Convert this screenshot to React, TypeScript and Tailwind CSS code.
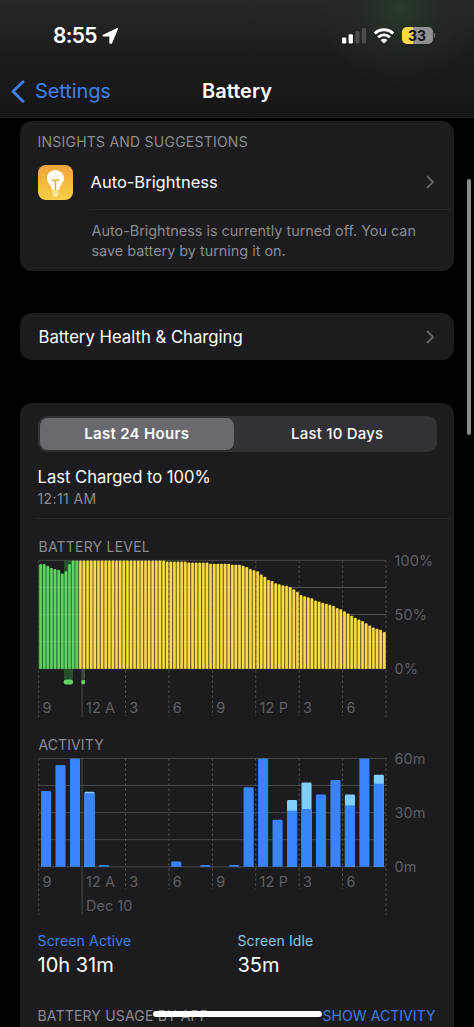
import React from 'react'

const PLOT_LEFT = 18.7
const PLOT_WIDTH = 347.3
const PLOT_TOP = 5.4
const PLOT_HEIGHT = 108.4
const PLOT_BOTTOM = PLOT_TOP + PLOT_HEIGHT
const PLOT_RIGHT = PLOT_LEFT + PLOT_WIDTH

const HOUR = PLOT_WIDTH / 24
const QUARTER = PLOT_WIDTH / 96

const HOUR_LABELS = ['9', '12 A', '3', '6', '9', '12 P', '3', '6']

// One reading every 15 minutes
const BATTERY_LEVELS = [
  96.6, 96.6, 95, 93, 92, 91.3, 88, 90, 96.6, 100, 100,
  ...Array<number>(24).fill(100),
  ...Array<number>(6).fill(99),
  ...Array<number>(6).fill(98),
  ...Array<number>(6).fill(97),
  96, 96, 96, 95, 94, 92, 91, 90, 87, 85, 82, 81, 79, 78, 77, 76.5, 75.5, 73.5, 71, 68, 67, 66, 65, 63,
  62, 61, 60, 59, 58, 56, 55, 53, 51, 49, 47, 45.5, 44, 42, 40, 38, 37, 36, 34,
]
const GREEN_COUNT = 11

// Minutes per hour, [active, idle]
const ACTIVITY: [number, number][] = [
  [42, 0], [56.3, 0], [60, 0], [40.7, 0.8], [1, 0], [0, 0], [0, 0], [0, 0],
  [0, 0], [3, 0], [0, 0], [1, 0], [0, 0], [1, 0], [44, 0], [60, 0],
  [26, 0], [31, 6], [32, 14.7], [40, 0], [48, 0], [34, 6], [60, 0], [46, 5],
]

function ChevronRight({ className = '' }: { className?: string }) {
  return (
    <svg className={`shrink-0 ${className}`} width="9" height="14" viewBox="0 0 9 14" fill="none">
      <path d="M1.5 1.5L7 7L1.5 12.5" stroke="#636366" strokeWidth="1.9" strokeLinecap="round" strokeLinejoin="round" />
    </svg>
  )
}

function StatusBar() {
  return (
    <div className="flex h-[71px] items-center pr-[39px] pl-[53px] text-white">
      <span className="w-[49px] text-[21px] leading-5 font-semibold tracking-[-0.7px]">8:55</span>
      <svg width="17" height="18" viewBox="0 0 17 18">
        <path
          d="M15 2L1.5 8.6H8.3V15.8H9.2Z"
          fill="white"
          stroke="white"
          strokeWidth="1.9"
          strokeLinejoin="round"
        />
      </svg>
      <div className="ml-auto flex items-center">
        <svg width="25" height="17" viewBox="0 0 25 17">
          <rect x="0" y="10.5" width="4.3" height="6" rx="1.1" fill="white" />
          <rect x="6.6" y="7.3" width="4.3" height="9.2" rx="1.1" fill="white" />
          <rect x="13.2" y="4.2" width="4.3" height="12.3" rx="1.1" fill="#4a4c4b" />
          <rect x="19.8" y="1" width="4.3" height="15.5" rx="1.1" fill="#4a4c4b" />
        </svg>
        <svg className="ml-[6px]" width="22" height="16" viewBox="0 0 22 16" fill="none">
          <path d="M1.7 5.5A13.4 13.4 0 0 1 20.3 5.5" stroke="white" strokeWidth="2.9" />
          <path d="M5.1 9.2A8.5 8.5 0 0 1 16.9 9.2" stroke="white" strokeWidth="2.8" />
          <path d="M7.6 12.1A4.9 4.9 0 0 1 14.4 12.1L11 15.6Z" fill="white" />
        </svg>
        <div className="ml-[7px] flex items-center">
          <div className="flex h-[17px] w-[31px] items-center justify-center rounded-[5px] bg-linear-to-r from-[#f9d949] from-35% to-[#8f908f] to-35%">
            <span className="text-[14px] leading-none font-bold text-[#161616]">33</span>
          </div>
          <div className="ml-px h-[5px] w-[1.5px] rounded-r bg-[#7c7d7c]" />
        </div>
      </div>
    </div>
  )
}

function Header() {
  return (
    <header className="h-[118px] border-b border-[#1f1f20] bg-[radial-gradient(ellipse_80px_75px_at_400px_8px,#293b2b_0%,#242c2599_50%,transparent_100%),linear-gradient(to_bottom,#272728,#1c1c1c_50%,#151515)]">
      <StatusBar />
      <div className="grid h-10 grid-cols-3 items-center">
        <a className="flex items-center pl-[11px] text-[#4080ed]">
          <svg width="14" height="23" viewBox="0 0 14 23" fill="none">
            <path d="M12 1.7L2 11.5L12 21.3" stroke="currentColor" strokeWidth="2.8" strokeLinecap="round" strokeLinejoin="round" />
          </svg>
          <span className="ml-2.5 text-xl leading-6 tracking-[-0.1px]">Settings</span>
        </a>
        <h1 className="text-center text-xl leading-6 font-semibold tracking-[0.05px] text-white">Battery</h1>
      </div>
    </header>
  )
}

function BulbIcon() {
  return (
    <div className="flex size-[35px] shrink-0 items-center justify-center rounded-lg bg-linear-to-b from-[#f0a23a] to-[#f6cf48]">
      <svg width="19" height="28" viewBox="0 0 19 28" fill="none">
        <path
          d="M9.5 1C4.7 1 1 4.6 1 9.1C1 14 5 15.8 5.9 20.4C6 21 6.3 21.3 6.9 21.3H12.1C12.7 21.3 13 21 13.1 20.4C14 15.8 18 14 18 9.1C18 4.6 14.3 1 9.5 1Z"
          fill="#fffdf4"
        />
        <path d="M9.5 21V11.2M6 11.2H13" stroke="#e3ab3c" strokeWidth="1.4" />
        <path d="M6.6 23H12.4M7 25H12" stroke="#fffdf4" strokeWidth="1.2" strokeLinecap="round" />
        <path d="M8 26.8H11" stroke="#fffdf4" strokeWidth="1" strokeLinecap="round" />
      </svg>
    </div>
  )
}

function InsightsCard() {
  return (
    <section className="h-[150px] rounded-xl bg-[#1c1c1e] pt-[11px] pl-[17.5px]">
      <h2 className="text-[14px] leading-5 tracking-[0.23px] text-[#8b8b90]">INSIGHTS AND SUGGESTIONS</h2>
      <div className="flex">
        <div className="pt-[13px]">
          <BulbIcon />
        </div>
        <div className="ml-4 flex-1">
          <div className="flex h-[58px] items-center justify-between border-b border-[#28282a] pt-[3px] pr-[19px] pl-0.5">
            <span className="text-[16.5px] leading-6 text-white">Auto-Brightness</span>
            <ChevronRight />
          </div>
          <p className="pt-[11px] pl-[3px] text-[14.4px] leading-5 text-[#8b8b90]">
            Auto-Brightness is currently turned off. You can
            <br />
            save battery by turning it on.
          </p>
        </div>
      </div>
    </section>
  )
}

function Gridlines() {
  return (
    <>
      {[0, 0.25, 0.5, 0.75, 1].map((f) => (
        <line
          key={f}
          x1={PLOT_LEFT}
          x2={PLOT_RIGHT}
          y1={PLOT_TOP + f * PLOT_HEIGHT}
          y2={PLOT_TOP + f * PLOT_HEIGHT}
          stroke="#464648"
        />
      ))}
    </>
  )
}

function HourLines({ bottom, edgeBottom, labelY }: { bottom: number; edgeBottom: number; labelY: number }) {
  return (
    <>
      {Array.from({ length: 9 }, (_, i) => {
        const x = PLOT_LEFT + i * HOUR * 3
        const midnight = i === 1
        const edge = i === 0 || i === 8
        return (
          <g key={i}>
            <line
              x1={x}
              x2={x}
              y1={PLOT_TOP}
              y2={edge || midnight ? edgeBottom : bottom}
              stroke={midnight ? '#48484a' : '#505052'}
              strokeDasharray={midnight ? undefined : '2.5 2.5'}
            />
            {HOUR_LABELS[i] && (
              <text x={x + 3.8} y={labelY} fill="#5f5f62" className="text-[14.4px] tracking-[0.15px]">
                {HOUR_LABELS[i]}
              </text>
            )}
          </g>
        )
      })}
    </>
  )
}

function ScaleLabels({ labels }: { labels: string[] }) {
  return (
    <>
      {labels.map((label, i) => (
        <text key={label} x={374.5} y={PLOT_TOP + 5.5 + (i * PLOT_HEIGHT) / 2} fill="#5f5f62" className="text-[14.4px] tracking-[0.15px]">
          {label}
        </text>
      ))}
    </>
  )
}

function BatteryLevelChart() {
  return (
    <svg className="block overflow-visible" width="434" height="172" viewBox="0 0 434 172">
      <Gridlines />
      <HourLines bottom={161} edgeBottom={162} labelY={158} />
      {/* charging window */}
      <rect x="44" y={PLOT_TOP} width="9" height="119" fill="#285f31" fillOpacity="0.75" />
      <rect x="61.5" y={PLOT_BOTTOM} width="3.5" height="10" fill="#3c4b3e" />
      {BATTERY_LEVELS.map((level, i) => {
        const h = (level / 100) * PLOT_HEIGHT
        const x = PLOT_LEFT + i * QUARTER
        const y = PLOT_BOTTOM - h
        const green = i < GREEN_COUNT
        return (
          <g key={i}>
            <rect x={x} y={y + 0.8} width={QUARTER} height={h - 0.8} fill={green ? '#2f8a3b' : '#8c7623'} />
            <rect x={x + 0.7} y={y} width="2.35" height={h} rx="0.6" fill={green ? '#64d267' : '#fbdd4e'} />
          </g>
        )
      })}
      {/* grid stays faintly visible over the bars */}
      {[0.25, 0.5, 0.75].map((f) => (
        <line
          key={f}
          x1={PLOT_LEFT}
          x2={PLOT_RIGHT}
          y1={PLOT_TOP + f * PLOT_HEIGHT}
          y2={PLOT_TOP + f * PLOT_HEIGHT}
          stroke="#ffffff"
          strokeOpacity="0.08"
        />
      ))}
      {[0, 2, 3, 4, 5, 6, 7].map((i) => (
        <line
          key={i}
          x1={PLOT_LEFT + i * HOUR * 3}
          x2={PLOT_LEFT + i * HOUR * 3}
          y1={PLOT_TOP}
          y2={PLOT_BOTTOM}
          stroke="#3a3a2c"
          strokeOpacity="0.45"
          strokeDasharray="2.5 2.5"
        />
      ))}
      <rect x="43.7" y="124.5" width="9.3" height="5" rx="2.2" fill="#64d267" />
      <rect x="61.4" y="124.5" width="3.6" height="5" rx="1.8" fill="#64d267" />
      <ScaleLabels labels={['100%', '50%', '0%']} />
    </svg>
  )
}

function ActivityChart() {
  return (
    <svg className="block overflow-visible" width="434" height="170" viewBox="0 0 434 170">
      <Gridlines />
      <HourLines bottom={136} edgeBottom={161.5} labelY={134} />
      {ACTIVITY.map(([active, idle], i) => {
        const x = PLOT_LEFT + i * HOUR + 2.3
        const total = ((active + idle) / 60) * PLOT_HEIGHT
        const activeH = (active / 60) * PLOT_HEIGHT
        if (total === 0) return null
        return (
          <g key={i}>
            <path
              d={`M${x} ${PLOT_BOTTOM}v${1.3 - total}q0 -1.3 1.3 -1.3h7.5q1.3 0 1.3 1.3v${total - 1.3}z`}
              fill={idle > 0 ? '#7fcdfb' : '#3a84fb'}
            />
            {idle > 0 && <rect x={x} y={PLOT_BOTTOM - activeH} width="10.1" height={activeH} fill="#3a84fb" />}
          </g>
        )
      })}
      <ScaleLabels labels={['60m', '30m', '0m']} />
      <text x={PLOT_LEFT + HOUR * 3 + 3.8} y="158.3" fill="#5f5f62" className="text-[14.4px] tracking-[0.1px]">
        Dec 10
      </text>
    </svg>
  )
}

function UsageCard() {
  return (
    <section className="mt-[43px] h-[640px] rounded-t-xl bg-[#1c1c1e] pt-[13px]">
      <div className="mr-[17.5px] ml-[17.5px] flex h-9 rounded-[9px] bg-[#313136] p-0.5 text-center text-[15px] leading-8 text-white">
        <div className="w-[194.5px] rounded-lg bg-[#69696e] font-semibold tracking-[0.3px]">Last 24 Hours</div>
        <div className="flex-1 pl-1.5 font-medium tracking-[0.2px]">Last 10 Days</div>
      </div>
      <div className="ml-4 h-[67px] border-b border-[#28282a] pt-[13px] pl-[1.5px]">
        <p className="text-[16.6px] leading-6 text-white">Last Charged to 100%</p>
        <p className="text-[14px] leading-5 tracking-[0.4px] text-[#8b8b90]">12:11 AM</p>
      </div>
      <h2 className="mt-[18px] ml-[18.5px] h-[18px] text-[14px] leading-5 tracking-[0.22px] text-[#8b8b90]">BATTERY LEVEL</h2>
      <BatteryLevelChart />
      <h2 className="mt-2 ml-[18.5px] h-[18px] text-[14px] leading-5 tracking-[0.1px] text-[#8b8b90]">ACTIVITY</h2>
      <ActivityChart />
      <dl className="mt-2 ml-[17.5px] grid grid-cols-[200px_1fr]">
        <div>
          <dt className="text-[14px] leading-5 tracking-[0.15px] text-[#3f7ee6]">Screen Active</dt>
          <dd className="mt-0.5 text-xl leading-6 text-white">10h 31m</dd>
        </div>
        <div>
          <dt className="text-[14px] leading-5 tracking-[0.12px] text-[#85c8e6]">Screen Idle</dt>
          <dd className="mt-0.5 text-xl leading-6 text-white">35m</dd>
        </div>
      </dl>
      <div className="mt-[29px] mr-[18.5px] ml-[17.5px] flex justify-between text-[14px] leading-5">
        <h2 className="tracking-[0.18px] text-[#8b8b90]">BATTERY USAGE BY APP</h2>
        <span className="tracking-[0.05px] text-[#3f7ee6]">SHOW ACTIVITY</span>
      </div>
    </section>
  )
}

export default function App() {
  return (
    <div className="relative h-[1027px] w-[474px] overflow-hidden bg-black font-['Inter',sans-serif]">
      <Header />
      <main className="mr-5 ml-5 pt-[3px]">
        <InsightsCard />
        <section className="mt-[42px] flex h-[47px] items-center justify-between rounded-xl bg-[#1c1c1e] pr-[19px] pl-[18.5px]">
          <span className="text-[16.7px] leading-6 text-white">Battery Health &amp; Charging</span>
          <ChevronRight />
        </section>
        <UsageCard />
      </main>
      <div className="absolute top-[179px] right-[3.5px] h-64 w-[3.5px] rounded-full bg-[#8a8a8a]" />
      <div className="absolute top-[1011px] left-[153px] h-1.5 w-[169px] rounded-full bg-white" />
    </div>
  )
}
